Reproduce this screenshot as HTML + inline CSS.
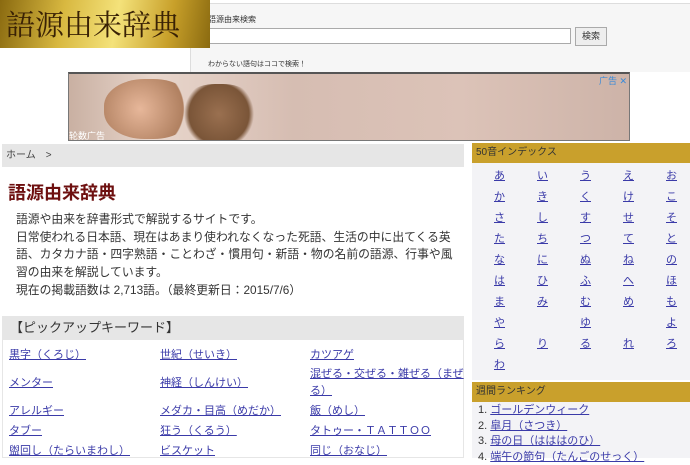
<!DOCTYPE html>
<html><head><meta charset="utf-8"><style>
*{margin:0;padding:0;box-sizing:border-box}
body{width:690px;height:458px;overflow:hidden;background:#fff;font-family:"Liberation Sans","Noto Sans CJK JP",sans-serif;position:relative;color:#333}
.a{position:absolute}
a{color:#3a3aa8;text-decoration:underline;white-space:nowrap}
</style></head><body>
<div class="a" style="left:190px;top:3px;width:500px;height:69px;background:#f6f6f6;border-top:1px solid #ddd;border-left:1px solid #ddd"></div>
<div class="a" style="left:208px;top:14px;font-size:8px;color:#333">語源由来検索</div>
<div class="a" style="left:205px;top:28px;width:366px;height:16px;background:#fff;border:1px solid #aaa"></div>
<div class="a" style="left:575px;top:27px;width:32px;height:19px;background:#eee;border:1px solid #aaa;font-size:9px;text-align:center;line-height:17px">検索</div>
<div class="a" style="left:208px;top:59px;font-size:7px;color:#333">わからない語句はココで検索！</div>
<div class="a" style="left:0;top:0;width:210px;height:48px;background:linear-gradient(100deg,#8a6a10 0%,#d8b840 30%,#f4e27a 55%,#c8a02a 80%,#8a6a10 100%);font-family:'Noto Serif CJK SC',serif;font-size:29px;color:#3a2205;line-height:48px;padding-left:6px">語源由来辞典</div>
<div class="a" style="left:68px;top:72px;width:562px;height:69px;background:linear-gradient(90deg,#c9b0a2 0%,#e8d6cc 15%,#d6bdb2 40%,#dcc3b8 70%,#cdb3a8 100%);border:1px solid #777;border-top:2px solid #555;overflow:hidden">
<div class="a" style="left:35px;top:5px;width:90px;height:60px;border-radius:45%;background:radial-gradient(circle at 40% 50%,#e7b79a,#b08060 70%,transparent 72%)"></div>
<div class="a" style="left:110px;top:10px;width:80px;height:60px;border-radius:45%;background:radial-gradient(circle,#9a7050,#7a5538 60%,transparent 70%)"></div>
<div class="a" style="left:0;top:55px;width:40px;height:14px;color:#fff;font-size:9px;white-space:nowrap">轮数广告</div>
<div class="a" style="right:2px;top:0;font-size:9px;color:#3a8ad8">广告 ✕</div>
</div>
<div class="a" style="left:2px;top:144px;width:462px;height:23px;background:#e6e6e6;font-size:10px;line-height:23px;padding-left:4px;color:#444">ホーム　&gt;</div>
<div class="a" style="left:8px;top:179px;font-size:18px;font-weight:bold;color:#6e1010">語源由来辞典</div>
<div class="a" style="left:16px;top:211px;width:450px;font-size:11.8px;line-height:17.7px;color:#333">語源や由来を辞書形式で解説するサイトです。<br>日常使われる日本語、現在はあまり使われなくなった死語、生活の中に出てくる英<br>語、カタカナ語・四字熟語・ことわざ・慣用句・新語・物の名前の語源、行事や風<br>習の由来を解説しています。<br>現在の掲載語数は 2,713語。（最終更新日：2015/7/6）</div>
<div class="a" style="left:2px;top:316px;width:462px;height:142px;border:1px solid #e6e6e6"></div>
<div class="a" style="left:2px;top:316px;width:462px;height:24px;background:#e6e6e6;font-size:13px;line-height:24px;padding-left:8px;color:#333">【ピックアップキーワード】</div>
<div class="a" style="font-size:11px;left:0;top:0">
<a class="a" style="left:9px;top:346px">黒字（くろじ）</a>
<a class="a" style="left:160px;top:346px">世紀（せいき）</a>
<a class="a" style="left:310px;top:346px">カツアゲ</a>
<a class="a" style="left:9px;top:374px">メンター</a>
<a class="a" style="left:160px;top:374px">神経（しんけい）</a>
<a class="a" style="left:310px;top:366px;line-height:17px">混ぜる・交ぜる・雑ぜる（まぜ<br>る）</a>
<a class="a" style="left:9px;top:402px">アレルギー</a>
<a class="a" style="left:160px;top:402px">メダカ・目高（めだか）</a>
<a class="a" style="left:310px;top:402px">飯（めし）</a>
<a class="a" style="left:9px;top:422px">タブー</a>
<a class="a" style="left:160px;top:422px">狂う（くるう）</a>
<a class="a" style="left:310px;top:422px">タトゥー・ＴＡＴＴＯＯ</a>
<a class="a" style="left:9px;top:442px">盥回し（たらいまわし）</a>
<a class="a" style="left:160px;top:442px">ビスケット</a>
<a class="a" style="left:310px;top:442px">同じ（おなじ）</a>
</div>
<div class="a" style="left:472px;top:143px;width:218px;height:237px;background:#f3f3f6"></div>
<div class="a" style="left:472px;top:143px;width:218px;height:20px;background:#c9a02c;font-size:10px;line-height:20px;padding-left:4px;color:#333">50音インデックス</div>
<div class="a" style="left:472px;top:166px;font-size:11px;line-height:21px">
<div class="a" style="left:22px;width:20px">
<a>あ</a><br><a>か</a><br><a>さ</a><br><a>た</a><br><a>な</a><br><a>は</a><br><a>ま</a><br><a>や</a><br><a>ら</a><br><a>わ</a></div>
<div class="a" style="left:65px;width:20px"><a>い</a><br><a>き</a><br><a>し</a><br><a>ち</a><br><a>に</a><br><a>ひ</a><br><a>み</a><br><br><a>り</a></div>
<div class="a" style="left:108px;width:20px"><a>う</a><br><a>く</a><br><a>す</a><br><a>つ</a><br><a>ぬ</a><br><a>ふ</a><br><a>む</a><br><a>ゆ</a><br><a>る</a></div>
<div class="a" style="left:151px;width:20px"><a>え</a><br><a>け</a><br><a>せ</a><br><a>て</a><br><a>ね</a><br><a>へ</a><br><a>め</a><br><br><a>れ</a></div>
<div class="a" style="left:194px;width:20px"><a>お</a><br><a>こ</a><br><a>そ</a><br><a>と</a><br><a>の</a><br><a>ほ</a><br><a>も</a><br><a>よ</a><br><a>ろ</a></div>
</div>
<div class="a" style="left:472px;top:382px;width:218px;height:20px;background:#c9a02c;font-size:10px;line-height:20px;padding-left:4px;color:#333">週間ランキング</div>
<div class="a" style="left:472px;top:402px;width:218px;height:56px;background:#f3f3f6;font-size:11px;line-height:15.5px;padding-left:6px;padding-top:1px;color:#333;white-space:nowrap">
1. <a>ゴールデンウィーク</a><br>2. <a>皐月（さつき）</a><br>3. <a>母の日（はははのひ）</a><br>4. <a>端午の節句（たんごのせっく）</a></div>
</body></html>
